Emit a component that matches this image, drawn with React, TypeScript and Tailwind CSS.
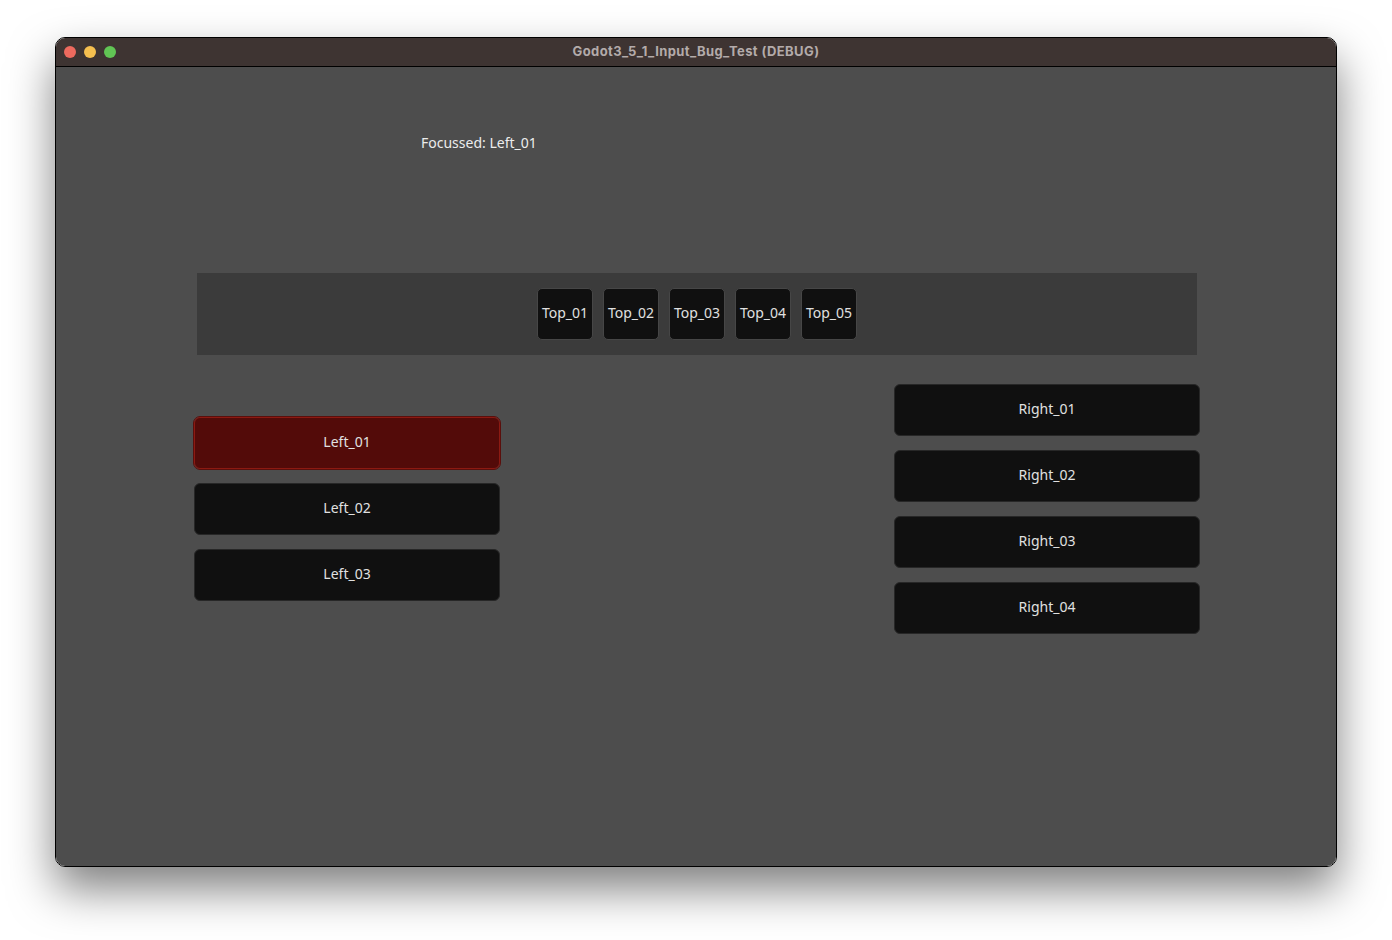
const TOP = ["Top_01", "Top_02", "Top_03", "Top_04", "Top_05"];
const LEFT = ["Left_01", "Left_02", "Left_03"];
const RIGHT = ["Right_01", "Right_02", "Right_03", "Right_04"];

function WideButton({ label, focused }: { label: string; focused?: boolean }) {
  return (
    <div
      className={
        "flex h-[52px] w-[306px] items-center justify-center rounded-[6px] border pb-[3px] text-[14px] text-[#e0e0e0] " +
        (focused ? "border-[#8c1a12] bg-[#530b09] outline outline-1 outline-[#5a0f0c]" : "border-[#272727] bg-[#101010]")
      }
    >
      {label}
    </div>
  );
}

export default function App() {
  return (
    <div className="min-h-[940px] bg-white pl-[55px] pt-[37px]">
      {/* Window */}
      <div className="h-[830px] w-[1282px] overflow-hidden rounded-[10px] border border-black shadow-[0_22px_45px_rgba(0,0,0,0.5)]">
        {/* Title bar */}
        <div className="relative flex h-[29px] items-center border-b border-black bg-[#3e3432] px-[8px]">
          <div className="flex gap-[8px]">
            <span className="h-[12px] w-[12px] rounded-full bg-[#ed6a5e]" />
            <span className="h-[12px] w-[12px] rounded-full bg-[#f5bf4f]" />
            <span className="h-[12px] w-[12px] rounded-full bg-[#61c554]" />
          </div>
          <div className="absolute inset-0 flex items-center justify-center font-['Inter','Liberation_Sans',sans-serif] text-[13px] font-bold tracking-[0.4px] text-[#b3abaa]">
            Godot3_5_1_Input_Bug_Test (DEBUG)
          </div>
        </div>

        {/* Game viewport */}
        <div className="h-[800px] overflow-hidden bg-[#4d4d4d] font-['Noto_Sans',sans-serif]">
          <div className="ml-[365px] mt-[66px] h-[19px] text-[14px] leading-[19px] text-[#ececec]">
            Focussed: Left_01
          </div>

          <div className="ml-[141px] mt-[121px] flex h-[82px] w-[1000px] items-center justify-center gap-[10px] bg-[#3b3b3b]">
            {TOP.map((t) => (
              <div
                key={t}
                className="flex h-[52px] w-[56px] items-center justify-center rounded-[5px] border border-[#464646] bg-[#101010] pb-[4px] text-[14px] text-[#e0e0e0]"
              >
                {t}
              </div>
            ))}
          </div>

          <div className="mt-[29px] flex items-start">
            <div className="ml-[138px] mt-[33px] flex flex-col gap-[14px]">
              {LEFT.map((l, i) => (
                <WideButton key={l} label={l} focused={i === 0} />
              ))}
            </div>
            <div className="ml-[394px] flex flex-col gap-[14px]">
              {RIGHT.map((r) => (
                <WideButton key={r} label={r} />
              ))}
            </div>
          </div>
        </div>
      </div>
    </div>
  );
}
